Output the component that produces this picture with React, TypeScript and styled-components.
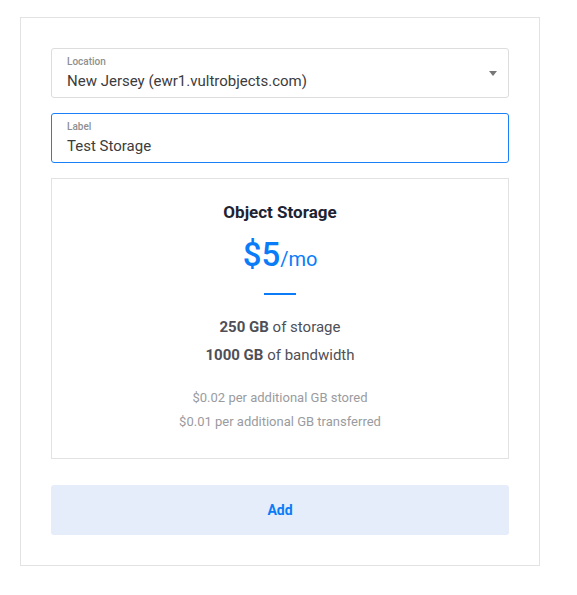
import React from "react";
import styled, { createGlobalStyle } from "styled-components";

const GlobalStyle = createGlobalStyle`
  html, body {
    margin: 0;
    padding: 0;
    background: #fff;
    font-family: Roboto, "Noto Sans", "Liberation Sans", sans-serif;
  }
`;

const Page = styled.div`
  padding: 17px 37px 30px 20px;
`;

const Panel = styled.div`
  width: 520px;
  box-sizing: border-box;
  border: 1px solid #e2e2e2;
  padding: 30px;
  display: flex;
  flex-direction: column;
`;

const Field = styled.div<{ $focused?: boolean }>`
  position: relative;
  height: 50px;
  box-sizing: border-box;
  border: 1px solid ${(p) => (p.$focused ? "#1a80f8" : "#dddddd")};
  border-radius: 3px;
  padding: 7px 15px 0 15px;
  display: flex;
  flex-direction: column;
  margin-bottom: 15px;
`;

const FieldLabel = styled.span`
  font-size: 10px;
  line-height: 12px;
  color: #8f8f8f;
  font-weight: 500;
`;

const FieldValue = styled.span`
  font-size: 15px;
  line-height: 22px;
  color: #3c3c3c;
  margin-top: 2px;
`;

const Caret = styled.span`
  position: absolute;
  right: 11px;
  top: 22px;
  width: 0;
  height: 0;
  border-left: 4px solid transparent;
  border-right: 4px solid transparent;
  border-top: 5px solid #777;
`;

const PlanCard = styled.div`
  border: 1px solid #e2e2e2;
  padding: 23px 20px 24px;
  display: flex;
  flex-direction: column;
  align-items: center;
  text-align: center;
`;

const PlanTitle = styled.div`
  font-size: 17px;
  line-height: 20px;
  font-weight: 700;
  color: #1d2333;
`;

const Price = styled.div`
  margin-top: 13px;
  color: #0a7cf8;
  line-height: 40px;
  display: flex;
  align-items: baseline;
`;

const Amount = styled.span`
  font-size: 33px;
  font-weight: 500;
`;

const Period = styled.span`
  font-size: 20px;
`;

const Divider = styled.div`
  width: 32px;
  height: 2px;
  background: #0a7cf8;
  margin-top: 14px;
`;

const Specs = styled.div`
  margin-top: 18px;
  display: flex;
  flex-direction: column;
`;

const Spec = styled.div`
  font-size: 15px;
  line-height: 28px;
  color: #4e4f57;

  b {
    font-weight: 700;
  }
`;

const Extras = styled.div`
  margin-top: 17px;
  display: flex;
  flex-direction: column;
`;

const Extra = styled.div`
  font-size: 13px;
  line-height: 24px;
  color: #9a9ba0;
`;

const AddButton = styled.button`
  margin-top: 26px;
  height: 50px;
  border: none;
  border-radius: 3px;
  background: #e5ecfa;
  color: #0a7cf8;
  font-family: inherit;
  font-size: 14px;
  font-weight: 700;
  cursor: pointer;
`;

export default function App() {
  return (
    <>
      <GlobalStyle />
      <Page>
        <Panel>
          <Field>
            <FieldLabel>Location</FieldLabel>
            <FieldValue>New Jersey (ewr1.vultrobjects.com)</FieldValue>
            <Caret />
          </Field>
          <Field $focused>
            <FieldLabel>Label</FieldLabel>
            <FieldValue>Test Storage</FieldValue>
          </Field>
          <PlanCard>
            <PlanTitle>Object Storage</PlanTitle>
            <Price>
              <Amount>$5</Amount>
              <Period>/mo</Period>
            </Price>
            <Divider />
            <Specs>
              <Spec>
                <b>250 GB</b> of storage
              </Spec>
              <Spec>
                <b>1000 GB</b> of bandwidth
              </Spec>
            </Specs>
            <Extras>
              <Extra>$0.02 per additional GB stored</Extra>
              <Extra>$0.01 per additional GB transferred</Extra>
            </Extras>
          </PlanCard>
          <AddButton>Add</AddButton>
        </Panel>
      </Page>
    </>
  );
}
